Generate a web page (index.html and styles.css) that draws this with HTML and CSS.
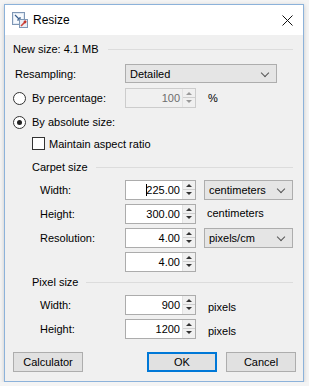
FILE: index.html
```html
<!DOCTYPE html>
<html lang="en">
<head>
    <meta charset="UTF-8">
    <title>Resize</title>
    <link rel="stylesheet" href="styles.css">
</head>
<body>
    <div class="window">
        <div class="titlebar">
            <svg class="app-icon" width="16" height="16" viewBox="0 0 16 16">
                <rect x="0.5" y="0.5" width="12" height="12" fill="#dfe8f3" stroke="#7f97b5"/>
                <rect x="2" y="2" width="9" height="9" fill="#f7fafd"/>
                <path d="M3 3 L8 8 M8 5 V8 H5" stroke="#3a5f8e" stroke-width="1.2" fill="none"/>
                <rect x="7.5" y="7.5" width="8" height="8" fill="#e9eef5" stroke="#7f97b5"/>
                <path d="M9 14 L14 9" stroke="#d0453b" stroke-width="1.6"/>
                <circle cx="13" cy="10" r="1.4" fill="#c3362c"/>
            </svg>
            <span class="title">Resize</span>
            <svg class="close" width="11" height="11" viewBox="0 0 11 11">
                <path d="M0.5 0.5 L10.5 10.5 M10.5 0.5 L0.5 10.5" stroke="#111" stroke-width="1"/>
            </svg>
        </div>
        <div class="client">
            <div class="row newsize">
                <span>New size: 4.1 MB</span>
                <span class="rule"></span>
            </div>
            <div class="row resampling">
                <span class="label">Resampling:</span>
                <div class="select wide">Detailed<span class="chev"></span></div>
            </div>
            <div class="row percent">
                <span class="radio"></span>
                <span class="label radio-label">By percentage:</span>
                <div class="spin disabled"><span class="val">100</span><span class="arrows"></span></div>
                <span class="unit pct">%</span>
            </div>
            <div class="row absolute">
                <span class="radio on"></span>
                <span class="radio-label">By absolute size:</span>
            </div>
            <div class="row check">
                <span class="box"></span>
                <span>Maintain aspect ratio</span>
            </div>

            <div class="row group-head">
                <span>Carpet size</span>
                <span class="rule"></span>
            </div>
            <div class="row field first">
                <span class="label">Width:</span>
                <div class="spin"><span class="val"><i class="caret"></i>225.00</span><span class="arrows"></span></div>
                <div class="select unitsel">centimeters<span class="chev"></span></div>
            </div>
            <div class="row field">
                <span class="label">Height:</span>
                <div class="spin"><span class="val">300.00</span><span class="arrows"></span></div>
                <span class="unit cm">centimeters</span>
            </div>
            <div class="row field">
                <span class="label">Resolution:</span>
                <div class="spin"><span class="val">4.00</span><span class="arrows"></span></div>
                <div class="select unitsel">pixels/cm<span class="chev"></span></div>
            </div>
            <div class="row field">
                <span class="label"></span>
                <div class="spin"><span class="val">4.00</span><span class="arrows"></span></div>
            </div>

            <div class="row group-head pixel">
                <span>Pixel size</span>
                <span class="rule"></span>
            </div>
            <div class="row field first">
                <span class="label">Width:</span>
                <div class="spin"><span class="val">900</span><span class="arrows"></span></div>
                <span class="unit px">pixels</span>
            </div>
            <div class="row field">
                <span class="label">Height:</span>
                <div class="spin"><span class="val">1200</span><span class="arrows"></span></div>
                <span class="unit px">pixels</span>
            </div>

            <div class="row buttons">
                <button class="btn">Calculator</button>
                <span class="spacer"></span>
                <button class="btn default">OK</button>
                <button class="btn">Cancel</button>
            </div>
        </div>
    </div>
</body>
</html>
```

FILE: styles.css
```css
body {
    margin: 0;
    background-color: #f4f4f4;
    font-family: 'Liberation Sans', Arial, sans-serif;
    font-size: 11px;
    color: #000;
}
.window {
    margin: 4px 0 0 4px;
    width: 298px;
    border: 1px solid #8cb2da;
    background-color: #f0f0f0;
    box-shadow: 0 1px 4px rgba(0,0,0,0.18);
}
.titlebar {
    height: 30px;
    background-color: #fff;
    display: flex;
    align-items: center;
    padding-left: 7px;
}
.app-icon {
    margin-right: 5px;
}
.title {
    font-size: 12px;
    flex: 1;
}
.close {
    margin-right: 10px;
}
.client {
    padding: 6px 0 9px 8px;
    display: flex;
    flex-direction: column;
}
.row {
    display: flex;
    align-items: center;
    height: 20px;
}
.rule {
    flex: 1;
    height: 0;
    border-top: 1px solid #dcdcdc;
    margin: 1px 10px 0 9px;
}
.newsize {
    height: 16px;
}
.resampling {
    margin-top: 7px;
    height: 19px;
}
.resampling .label {
    width: 110px;
    padding-left: 2px;
}
.select {
    height: 19px;
    box-sizing: border-box;
    border: 1px solid #adadad;
    background-color: #e5e5e5;
    display: flex;
    align-items: center;
    padding-left: 4px;
    position: relative;
}
.select.wide {
    width: 152px;
}
.chev {
    position: absolute;
    right: 8px;
    top: 5px;
    width: 5px;
    height: 5px;
    border-right: 1px solid #555;
    border-bottom: 1px solid #555;
    transform: rotate(45deg);
}
.percent {
    margin-top: 5px;
}
.absolute {
    margin-top: 4px;
}
.radio {
    width: 11px;
    height: 11px;
    border: 1px solid #333;
    border-radius: 50%;
    background-color: #fff;
    position: relative;
    margin-right: 6px;
}
.radio.on::after {
    content: '';
    position: absolute;
    left: 3px;
    top: 3px;
    width: 5px;
    height: 5px;
    border-radius: 50%;
    background-color: #222;
}
.percent .radio-label {
    width: 93px;
}
.spin {
    width: 71px;
    height: 20px;
    box-sizing: border-box;
    border: 1px solid #acacac;
    background-color: #fff;
    display: flex;
    align-items: center;
}
.spin .val {
    flex: 1;
    text-align: right;
    padding-right: 2px;
    position: relative;
}
.spin.disabled {
    background-color: #f0f0f0;
    border-color: #ccc;
    color: #6d6d6d;
}
.arrows {
    width: 13px;
    height: 18px;
    box-sizing: border-box;
    background-color: #f0f0f0;
    border-left: 1px solid #e2e2e2;
    position: relative;
    background-image: linear-gradient(#cfcfcf, #cfcfcf);
    background-size: 100% 1px;
    background-position: 0 8px;
    background-repeat: no-repeat;
}
.arrows::before,
.arrows::after {
    content: '';
    position: absolute;
    left: 3px;
    border-left: 3px solid transparent;
    border-right: 3px solid transparent;
}
.arrows::before {
    top: 3px;
    border-bottom: 3px solid #333;
}
.arrows::after {
    top: 11px;
    border-top: 3px solid #333;
}
.disabled .arrows::before {
    border-bottom-color: #999;
}
.disabled .arrows::after {
    border-top-color: #999;
}
.caret {
    display: inline-block;
    width: 1px;
    height: 12px;
    background-color: #000;
    vertical-align: -2px;
    margin-right: -1px;
}
.unit.pct {
    margin-left: 12px;
}
.check {
    margin-top: 2px;
    height: 19px;
    padding-left: 19px;
}
.box {
    width: 11px;
    height: 11px;
    border: 1px solid #333;
    background-color: #fff;
    margin-right: 4px;
}
.group-head {
    margin-top: 7px;
    height: 14px;
    padding-left: 19px;
}
.group-head.pixel {
    margin-top: 3px;
}
.group-head .rule {
    margin-left: 8px;
}
.field {
    margin-top: 4px;
}
.field.first {
    margin-top: 6px;
}
.field .label {
    width: 85px;
    padding-left: 27px;
}
.unitsel {
    width: 89px;
    margin-left: 8px;
    height: 20px;
}
.unit.cm {
    margin-left: 11px;
    margin-top: -3px;
}
.unit.px {
    margin-left: 12px;
    margin-top: 3px;
}
.buttons {
    margin-top: 13px;
    padding-right: 7px;
}
.spacer {
    flex: 1;
}
.btn {
    width: 70px;
    height: 20px;
    font-family: inherit;
    font-size: 11px;
    background-color: #e1e1e1;
    border: 1px solid #adadad;
    padding: 0;
    margin-left: 0;
}
.btn.default {
    border: 2px solid #0078d7;
    margin-right: 9px;
}
```
